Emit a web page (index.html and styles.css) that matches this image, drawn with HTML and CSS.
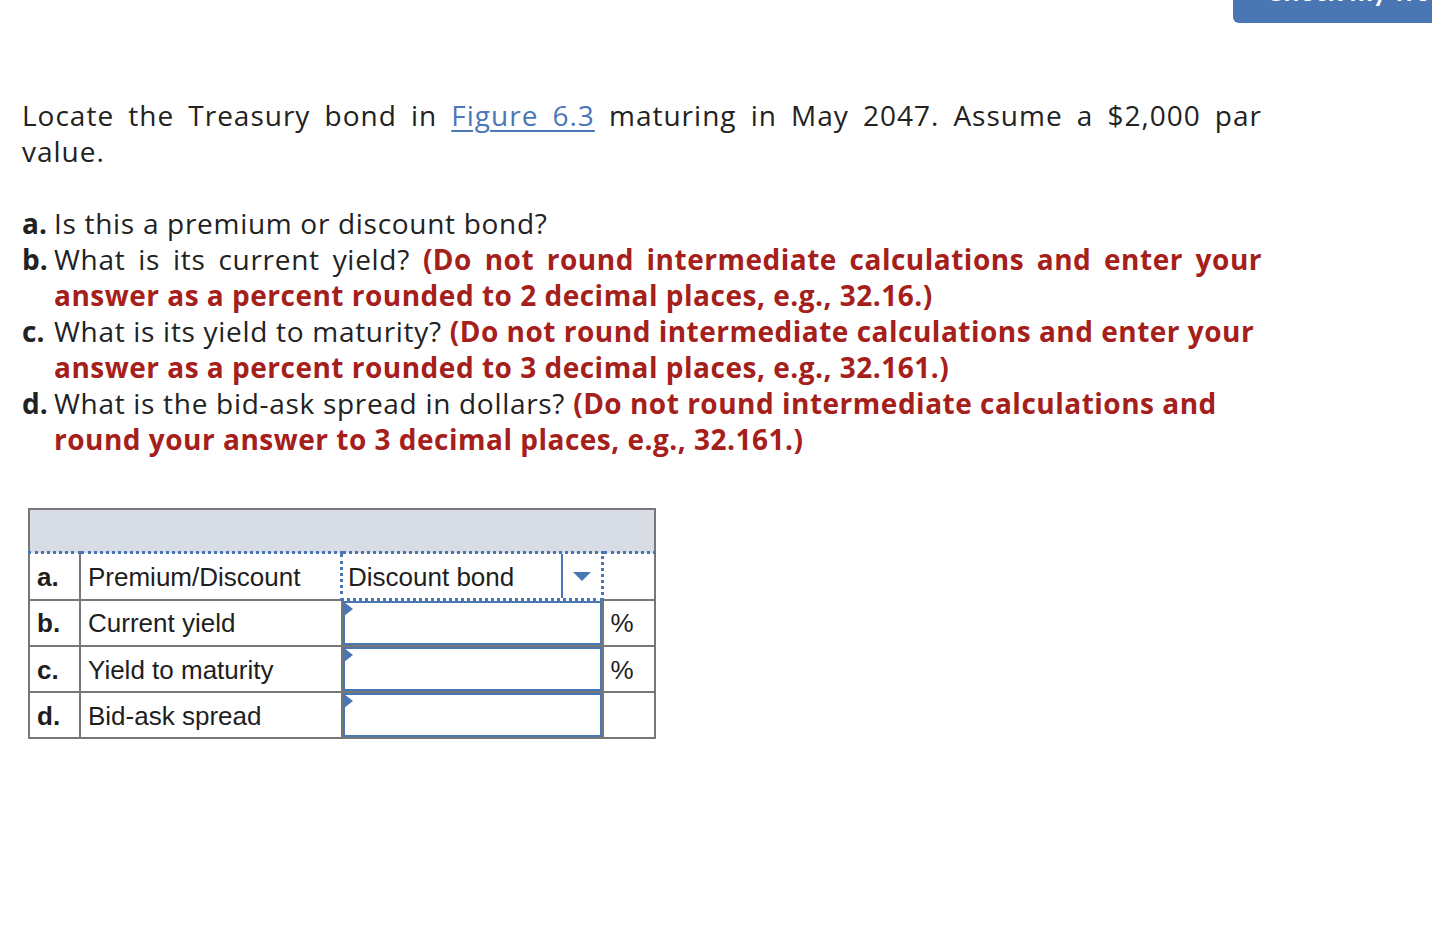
FILE: index.html
```html
<!DOCTYPE html>
<html>
<head>
<meta charset="utf-8">
<link rel="stylesheet" href="styles.css">
</head>
<body>
<div class="topbar">
  <button class="check">Check my work</button>
</div>
<div class="content">
  <p class="intro">Locate the Treasury bond in <a href="#" class="link">Figure 6.3</a> maturing in May 2047. Assume a $2,000 par value.</p>
  <div class="qlist">
    <div class="q"><span class="lbl">a.</span>Is this a premium or discount bond?</div>
    <div class="q justify"><span class="lbl">b.</span>What is its current yield? <strong class="hint">(Do not round intermediate calculations and enter your answer as a percent rounded to 2 decimal places, e.g., 32.16.)</strong></div>
    <div class="q"><span class="lbl">c.</span>What is its yield to maturity? <strong class="hint">(Do not round intermediate calculations and enter your answer as a percent rounded to 3 decimal places, e.g., 32.161.)</strong></div>
    <div class="q"><span class="lbl">d.</span>What is the bid-ask spread in dollars? <strong class="hint">(Do not round intermediate calculations and round your answer to 3 decimal places, e.g., 32.161.)</strong></div>
  </div>

  <table class="answers">
    <tr class="head"><td colspan="4"></td></tr>
    <tr class="row-a">
      <td class="c1">a.</td>
      <td class="c2">Premium/Discount</td>
      <td class="c3 sel-cell">
        <div class="select">
          <span class="sel-text">Discount bond</span>
          <span class="sel-arrow"><span class="tri-down"></span></span>
        </div>
      </td>
      <td class="c4 a4"></td>
    </tr>
    <tr>
      <td class="c1">b.</td>
      <td class="c2">Current yield</td>
      <td class="c3 in-cell"><div class="input"><span class="flag"></span></div></td>
      <td class="c4">%</td>
    </tr>
    <tr>
      <td class="c1">c.</td>
      <td class="c2">Yield to maturity</td>
      <td class="c3 in-cell"><div class="input"><span class="flag"></span></div></td>
      <td class="c4">%</td>
    </tr>
    <tr>
      <td class="c1">d.</td>
      <td class="c2">Bid-ask spread</td>
      <td class="c3 in-cell"><div class="input"><span class="flag"></span></div></td>
      <td class="c4"></td>
    </tr>
  </table>
</div>
</body>
</html>
```

FILE: styles.css
```css
html, body {
  margin: 0;
  padding: 0;
  background: #ffffff;
}
body {
  font-family: "Open Sans", Lato, sans-serif;
  color: #222222;
}
.topbar {
  height: 23px;
  overflow: hidden;
  display: flex;
  justify-content: flex-end;
  align-items: flex-end;
}
.check {
  flex: none;
  width: 230px;
  height: 50px;
  margin-right: -31px;
  background: #4a76b4;
  color: #ffffff;
  border: none;
  border-radius: 0 0 0 6px;
  font-family: Lato, sans-serif;
  font-weight: 700;
  font-size: 28px;
  line-height: 28px;
  text-align: left;
  padding: 0 0 19px 32px;
  display: flex;
  align-items: flex-end;
}
.content {
  width: 1240px;
  padding: 74px 0 0 22px;
}
.intro {
  margin: 0 0 36px 0;
  font-size: 28px;
  letter-spacing: 1px;
  line-height: 36px;
  text-align: justify;
}
.link {
  color: #4a78b8;
  text-decoration: underline;
  text-underline-offset: 4px;
  text-decoration-thickness: 2px;
}
.qlist {
  font-size: 28px;
  letter-spacing: 0.7px;
  line-height: 36px;
}
.q {
  padding-left: 32px;
  text-indent: -32px;
}
.q.justify {
  text-align: justify;
}
.lbl {
  display: inline-block;
  width: 32px;
  text-indent: 0;
  font-weight: 700;
  letter-spacing: 0;
}
.hint {
  color: #a5201b;
  font-weight: 700;
  letter-spacing: 0.5px;
}
.answers {
  margin-top: 51px;
  margin-left: 6px;
  border-collapse: collapse;
  font-family: "Liberation Sans", Arial, sans-serif;
  font-size: 26px;
  color: #1e1e1e;
}
.answers td {
  border: 2px solid #777777;
  padding: 2px 0 0 7px;
  height: 42px;
  vertical-align: middle;
  white-space: nowrap;
}
.answers .head td {
  background: #d8dce4;
  padding: 0;
  height: 41px;
}
.c1 { width: 42px; font-weight: 700; }
.c2 { width: 252px; }
.c3 { width: 258px; }
.c4 { width: 43px; }
.row-a td {
  border-top: 3px dotted #4a76b4;
  height: 42px;
}
.answers td.sel-cell {
  padding: 0;
  border: 3px dotted #4a76b4;
}
.select {
  display: flex;
  height: 44px;
  align-items: center;
}
.sel-text {
  flex: 1;
  padding: 2px 0 0 5px;
}
.sel-arrow {
  width: 38px;
  align-self: stretch;
  border-left: 2px solid #4a76b4;
  display: flex;
  align-items: center;
  justify-content: center;
}
.tri-down {
  width: 0;
  height: 0;
  border-left: 9px solid transparent;
  border-right: 9px solid transparent;
  border-top: 9px solid #4a76b4;
}
.answers td.in-cell {
  padding: 0;
}
.input {
  position: relative;
  height: 40px;
  border: 2px solid #4a76b4;
  background: #ffffff;
}
.flag {
  position: absolute;
  left: -1px;
  top: -1px;
  width: 0;
  height: 0;
  border-top: 7px solid transparent;
  border-bottom: 7px solid transparent;
  border-left: 9px solid #4a76b4;
}
```
